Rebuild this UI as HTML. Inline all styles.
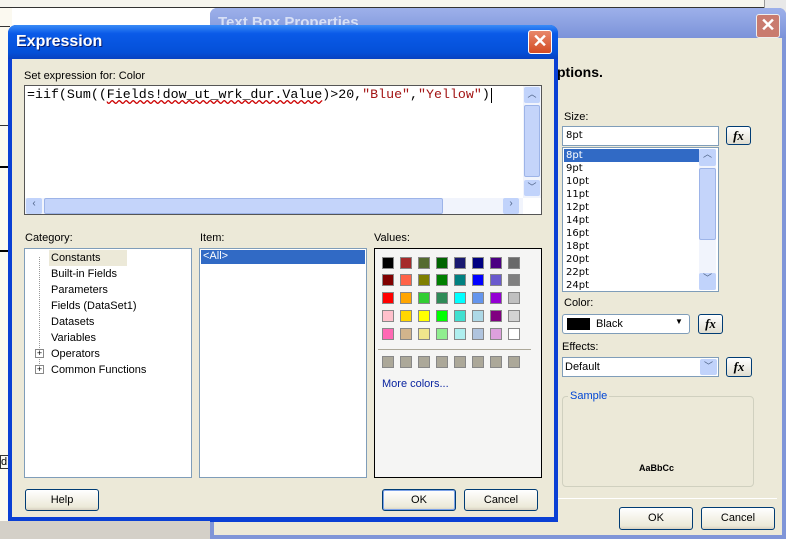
<!DOCTYPE html>
<html><head><style>
*{box-sizing:border-box;margin:0;padding:0}
body{width:786px;height:539px;position:relative;overflow:hidden;background:#fff;font-family:Tahoma,"Liberation Sans",sans-serif;font-size:11px;color:#000}
.a{position:absolute}
.btn{position:absolute;border:1px solid #003c74;border-radius:3px;background:linear-gradient(#fff,#ece9d8 85%,#d6d0c0);text-align:center;line-height:21px;font-size:11px}
.fx{position:absolute;border:1px solid #003c74;border-radius:3px;background:linear-gradient(#fff,#e0ddd0);font:italic bold 13px "Liberation Serif",serif;text-align:center;line-height:17px}
.sw{position:absolute;width:12px;height:12px;border:1px solid #888}
.mono{font-family:"Liberation Mono",monospace;font-size:13.3px}
</style></head><body>
<div class="a" style="left:0;top:0;width:786px;height:8px;background:#f6f5ee;border-bottom:1px solid #333"></div>
<div class="a" style="left:0;top:8px;width:12px;height:513px;background:#fbf9f0"></div>
<div class="a" style="left:0;top:26px;width:10px;height:1px;background:#333"></div>
<div class="a" style="left:0;top:125px;width:10px;height:1px;background:#333"></div>
<div class="a" style="left:0;top:166px;width:10px;height:2px;background:#000"></div>
<div class="a" style="left:0;top:250px;width:10px;height:2px;background:#000"></div>
<div class="a" style="left:0;top:455px;width:10px;height:14px;border:1px solid #333;font-size:11px">d</div>
<div class="a" style="left:0;top:521px;width:220px;height:18px;background:#d4d0c8"></div>
<div class="a" style="left:764px;top:0;width:22px;height:20px;background:#e8e8e8;border-left:1px solid #999"></div>

<div class="a" style="left:210px;top:8px;width:576px;height:531px;background:#7f95d8;border-radius:7px 7px 0 0"></div>
<div class="a" style="left:210px;top:8px;width:576px;height:30px;background:linear-gradient(#9db0ea,#7c93d9);border-radius:7px 7px 0 0;color:#d8e0f6;font:bold 15px Tahoma,'Liberation Sans',sans-serif;padding:6px 8px">Text Box Properties</div>
<div class="a" style="left:756px;top:14px;width:24px;height:24px;background:#c97b6f;border:1px solid #eee;border-radius:3px;color:#fff;font:bold 18px 'Liberation Sans',sans-serif;text-align:center;line-height:21px">✕</div>
<div class="a" style="left:214px;top:38px;width:568px;height:497px;background:#ece9d8"></div>
<div class="a" style="left:557px;top:64px;font:bold 14px Tahoma,'Liberation Sans',sans-serif">ptions.</div>
<div class="a" style="left:564px;top:111px">Size:</div>
<div class="a" style="left:562px;top:126px;width:157px;height:20px;background:#fff;border:1px solid #7f9db9;padding:3px 3px;font-family:'DejaVu Sans';font-size:10px">8pt</div>
<div class="fx" style="left:726px;top:126px;width:25px;height:19px">fx</div>
<div class="a" style="left:562px;top:147px;width:157px;height:145px;background:#fff;border:1px solid #7f9db9;font-family:'DejaVu Sans';font-size:10px;line-height:13px">
<div style="background:#316ac5;color:#fff;width:135px;margin:1px 0 0 1px;padding-left:2px">8pt</div>
<div style="padding-left:3px">9pt<br>10pt<br>11pt<br>12pt<br>14pt<br>16pt<br>18pt<br>20pt<br>22pt<br>24pt</div>
<div class="a" style="left:136px;top:1px;width:17px;height:141px;background:#f1f4fc">
<div class="a" style="left:0;top:0;width:17px;height:17px;background:#c1d3fb;border-radius:2px;font-size:9px;text-align:center;color:#4d6185">︿</div>
<div class="a" style="left:0;top:19px;width:17px;height:72px;background:#c4d4fa;border:1px solid #9db4e8;border-radius:2px"></div>
<div class="a" style="left:0;top:124px;width:17px;height:17px;background:#c1d3fb;border-radius:2px;font-size:9px;text-align:center;color:#4d6185">﹀</div>
</div></div>
<div class="a" style="left:564px;top:297px">Color:</div>
<div class="a" style="left:562px;top:314px;width:128px;height:20px;background:#fff;border:1px solid #7f9db9;border-radius:3px">
<div class="a" style="left:4px;top:3px;width:23px;height:12px;background:#000"></div>
<div class="a" style="left:33px;top:3px">Black</div>
<div class="a" style="left:112px;top:2px;font-size:8px">▼</div></div>
<div class="fx" style="left:698px;top:314px;width:25px;height:20px">fx</div>
<div class="a" style="left:562px;top:341px">Effects:</div>
<div class="a" style="left:562px;top:357px;width:157px;height:20px;background:#fff;border:1px solid #7f9db9;padding:3px 2px">Default
<div class="a" style="left:137px;top:1px;width:17px;height:16px;background:#c1d3fb;border-radius:2px;font-size:9px;text-align:center;color:#4d6185">﹀</div></div>
<div class="fx" style="left:726px;top:357px;width:26px;height:20px">fx</div>
<div class="a" style="left:562px;top:396px;width:192px;height:91px;border:1px solid #d0d0bf;border-radius:4px"></div>
<div class="a" style="left:568px;top:390px;background:#ece9d8;padding:0 2px;color:#0046d5">Sample</div>
<div class="a" style="left:639px;top:463px;font:bold 9px 'Liberation Sans',sans-serif">AaBbCc</div>
<div class="a" style="left:557px;top:498px;width:220px;height:1px;background:#aca899;border-bottom:1px solid #fff"></div>
<div class="btn" style="left:619px;top:507px;width:74px;height:23px">OK</div>
<div class="btn" style="left:701px;top:507px;width:74px;height:23px">Cancel</div>

<div class="a" style="left:8px;top:25px;width:550px;height:497px;background:#0a3fd4;border-radius:8px 8px 0 0"></div>
<div class="a" style="left:8px;top:25px;width:550px;height:34px;background:linear-gradient(#3a8cf7,#0a5ae8 25%,#0450d8 80%,#0842c0);border-radius:8px 8px 0 0;color:#fff;font:bold 16px Tahoma,'Liberation Sans',sans-serif;padding:8px 8px;text-shadow:1px 1px #0a1e6e">Expression</div>
<div class="a" style="left:528px;top:30px;width:24px;height:24px;background:linear-gradient(#e8876a,#d34b24);border:1px solid #fff;border-radius:3px;color:#fff;font:bold 18px 'Liberation Sans',sans-serif;text-align:center;line-height:21px">✕</div>
<div class="a" style="left:12px;top:59px;width:542px;height:458px;background:#ece9d8"></div>
<div class="a" style="left:24px;top:70px">Set expression for: Color</div>
<div class="a" style="left:24px;top:85px;width:518px;height:130px;background:#fff;border:1px solid #555">
<div class="a mono" style="left:2px;top:1px;white-space:pre">=iif(Sum((<span style="text-decoration:underline wavy #c00">Fields!dow_ut_wrk_dur.Value</span>)&gt;20,<span style="color:#a31515">"Blue"</span>,<span style="color:#a31515">"Yellow"</span>)</div>
<div class="a" style="left:466px;top:2px;width:1px;height:15px;background:#000"></div>
<div class="a" style="left:498px;top:0;width:18px;height:112px;background:#f1f4fc">
<div class="a" style="left:1px;top:1px;width:16px;height:16px;background:#c1d3fb;border-radius:2px;font-size:9px;text-align:center;color:#4d6185">︿</div>
<div class="a" style="left:1px;top:19px;width:16px;height:72px;background:#c4d4fa;border:1px solid #9db4e8;border-radius:2px"></div>
<div class="a" style="left:1px;top:94px;width:16px;height:16px;background:#c1d3fb;border-radius:2px;font-size:9px;text-align:center;color:#4d6185">﹀</div></div>
<div class="a" style="left:0;top:112px;width:498px;height:16px;background:#f1f4fc">
<div class="a" style="left:1px;top:0;width:16px;height:16px;background:#c1d3fb;border-radius:2px;font-size:10px;text-align:center;color:#4d6185">‹</div>
<div class="a" style="left:19px;top:0;width:399px;height:16px;background:#c4d4fa;border:1px solid #9db4e8;border-radius:2px"></div>
<div class="a" style="left:478px;top:0;width:16px;height:16px;background:#c1d3fb;border-radius:2px;font-size:10px;text-align:center;color:#4d6185">›</div></div>
</div>
<div class="a" style="left:25px;top:232px">Category:</div>
<div class="a" style="left:200px;top:232px">Item:</div>
<div class="a" style="left:374px;top:232px">Values:</div>
<div class="a" style="left:24px;top:248px;width:168px;height:230px;background:#fff;border:1px solid #7f9db9;line-height:16px">
<div class="a" style="left:24px;top:1px;width:78px;height:16px;background:#ece9d8"></div>
<div class="a" style="left:14px;top:8px;width:1px;height:117px;border-left:1px dotted #999"></div>
<div class="a" style="left:10px;top:100px;width:9px;height:9px;border:1px solid #888;background:#fff;font-size:9px;line-height:7px;text-align:center">+</div>
<div class="a" style="left:10px;top:116px;width:9px;height:9px;border:1px solid #888;background:#fff;font-size:9px;line-height:7px;text-align:center">+</div>
<div class="a" style="left:26px;top:1px">Constants<br>Built-in Fields<br>Parameters<br>Fields (DataSet1)<br>Datasets<br>Variables<br>Operators<br>Common Functions</div></div>
<div class="a" style="left:199px;top:248px;width:168px;height:230px;background:#fff;border:1px solid #7f9db9">
<div style="background:#316ac5;color:#fff;margin:1px;width:164px;padding-left:2px;height:14px">&lt;All&gt;</div></div>
<div class="a" style="left:374px;top:248px;width:168px;height:230px;background:#f5f5f4;border:1px solid #000">
<div class="a" style="left:3px;top:100px;width:153px;height:1px;background:#aca899"></div>
<div class="a" style="left:7px;top:129px;color:#0a24a0">More colors...</div></div>
<div id="sw"></div>
<div class="btn" style="left:25px;top:489px;width:74px;height:22px">Help</div>
<div class="btn" style="left:382px;top:489px;width:74px;height:22px;border-color:#003c74;box-shadow:inset 0 0 0 1px #7ca2e8">OK</div>
<div class="btn" style="left:464px;top:489px;width:74px;height:22px">Cancel</div>
<div class="a" style="left:0;top:521px;width:210px;height:18px;background:#d4d0c8"></div>
<script>
var c=[["#000","#a52a2a","#556b2f","#006400","#191970","#000080","#4b0082","#696969"],["#800000","#ff6347","#808000","#008000","#008080","#0000ff","#6a5acd","#808080"],["#ff0000","#ffa500","#32cd32","#2e8b57","#00ffff","#6495ed","#9400d3","#c0c0c0"],["#ffc0cb","#ffd700","#ffff00","#00ff00","#40e0d0","#add8e6","#800080","#d3d3d3"],["#ff69b4","#d2b48c","#f0e68c","#90ee90","#afeeee","#b0c4de","#dda0dd","#ffffff"],["#aca899","#aca899","#aca899","#aca899","#aca899","#aca899","#aca899","#aca899"]];
var ys=[257,274,292,310,328,356],h="";
for(var r=0;r<6;r++)for(var i=0;i<8;i++)h+='<div class="sw" style="left:'+(382+i*18)+'px;top:'+ys[r]+'px;background:'+c[r][i]+'"></div>';
document.getElementById("sw").innerHTML=h;
</script>
</body></html>
